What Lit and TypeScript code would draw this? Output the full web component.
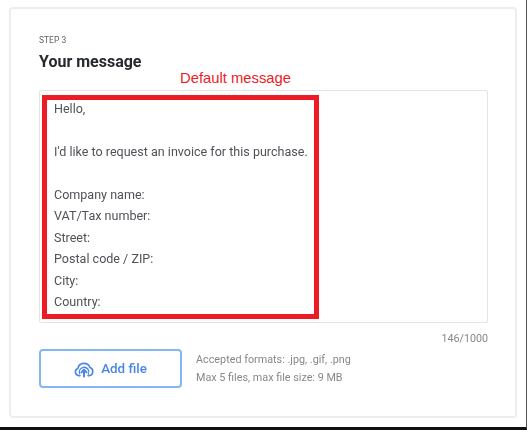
import { LitElement, html, css } from "lit";
import { customElement } from "lit/decorators.js";

const LINES = [
  "Hello,",
  "",
  "I'd like to request an invoice for this purchase.",
  "",
  "Company name:",
  "VAT/Tax number:",
  "Street:",
  "Postal code / ZIP:",
  "City:",
  "Country:",
];

@customElement("app-root")
export class AppRoot extends LitElement {
  static styles = css`
    :host {
      display: block;
      width: 527px;
      height: 430px;
      box-sizing: border-box;
      background: #fff;
      font-family: Roboto, "Liberation Sans", sans-serif;
      padding: 7px 9px 0 9px;
      border-bottom: 3px solid #111;
      border-right: 1px solid #555;
      overflow: hidden;
    }
    .card {
      box-sizing: border-box;
      height: 411px;
      border: 2px solid #ecedee;
      border-radius: 4px;
      padding: 26px 27px 0 28px;
    }
    .step {
      font-size: 8.5px;
      line-height: 10px;
      color: #5f6367;
      filter: blur(0.4px);
    }
    h2 {
      margin: 7px 0 18px;
      font-size: 16px;
      line-height: 20px;
      font-weight: 700;
      color: #26292e;
      filter: blur(0.4px);
    }
    .box {
      position: relative;
      box-sizing: border-box;
      height: 233px;
      border: 1px solid #e3e4e6;
      border-radius: 2px;
      padding: 7px 0 0 14px;
    }
    .caption {
      position: absolute;
      left: 140px;
      top: -22px;
      font-family: "Liberation Sans", Arial, sans-serif;
      font-size: 14.8px;
      line-height: 18px;
      color: #ed1c24;
      white-space: nowrap;
    }
    .marked {
      position: absolute;
      left: 2px;
      top: 4px;
      box-sizing: border-box;
      width: 277px;
      height: 224px;
      border: 5px solid #ed1c24;
    }
    .lines {
      filter: blur(0.4px);
    }
    .line {
      height: 21.45px;
      font-size: 12.55px;
      line-height: 21.45px;
      color: #4f5358;
      white-space: nowrap;
    }
    .count {
      margin-top: 9px;
      text-align: right;
      font-size: 10.7px;
      line-height: 14px;
      color: #85888b;
      filter: blur(0.4px);
    }
    .foot {
      display: flex;
      align-items: center;
      gap: 14px;
      margin-top: 3px;
    }
    .btn {
      box-sizing: border-box;
      width: 143px;
      height: 39px;
      display: flex;
      align-items: center;
      justify-content: center;
      gap: 7px;
      background: #fff;
      border: 2px solid #86b5f6;
      border-radius: 4px;
      color: #4a86e8;
      font-weight: 500;
      font-size: 13.4px;
      line-height: 16px;
    }
    .btn svg {
      width: 20px;
      height: 20px;
      display: block;
    }
    .btn span {
      filter: blur(0.4px);
    }
    .info {
      font-size: 10.8px;
      line-height: 18px;
      color: #85888b;
      filter: blur(0.4px);
    }
  `;

  render() {
    return html`
      <div class="card">
        <div class="step">STEP 3</div>
        <h2>Your message</h2>
        <div class="box">
          <div class="lines">
            ${LINES.map((l) => html`<div class="line">${l}</div>`)}
          </div>
          <div class="caption">Default message</div>
          <div class="marked"></div>
        </div>
        <div class="count">146/1000</div>
        <div class="foot">
          <div class="btn" role="button">
            <svg viewBox="0 0 20 20" fill="none" stroke="currentColor" stroke-width="1.6" stroke-linecap="round" stroke-linejoin="round">
              <path d="M6 16.6H4.8a3.7 3.7 0 0 1-.9-7.2A6.3 6.3 0 0 1 16 8.6a4.2 4.2 0 0 1-.3 8H14" />
              <path d="M5.6 14.6a4.8 4.8 0 0 1 8.2-4.6 4.8 4.8 0 0 1 .6 5" stroke-width="1.3" />
              <path d="M10 17.6V11M7.4 13.4 10 10.8l2.6 2.6" stroke-width="2" />
            </svg>
            <span>Add file</span>
          </div>
          <div class="info">
            <div>Accepted formats: .jpg, .gif, .png</div>
            <div>Max 5 files, max file size: 9 MB</div>
          </div>
        </div>
      </div>
    `;
  }
}
